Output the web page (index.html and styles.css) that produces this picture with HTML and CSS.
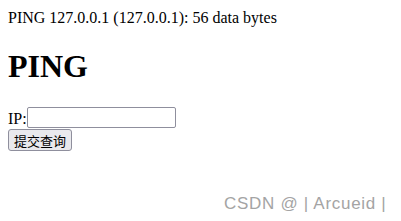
FILE: index.html
```html
<!DOCTYPE html>
<html lang="zh">
<head>
  <meta charset="UTF-8" />
  <title>PING</title>
  <link rel="stylesheet" href="styles.css">
</head>
<body>
  PING 127.0.0.1 (127.0.0.1): 56 data bytes
  <h1>PING</h1>
  <form class="ping-form">
    <div class="ip-row">IP:<input type="text" name="ip" class="ip-input"></div>
    <button type="submit" class="submit-btn">提交查询</button>
  </form>
  <div class="watermark">CSDN @ | Arcueid |</div>
</body>
</html>
```

FILE: styles.css
```css
body {
  margin: 9px 8px 8px;
  font-family: "Liberation Serif", "Noto Sans CJK SC", serif;
  font-size: 16px;
  color: #000;
  background: #fff;
}

h1 {
  font-size: 32px;
  margin: 21px 0 22px;
}

.ip-row {
  display: flex;
  align-items: flex-end;
  height: 21px;
}

.ip-input {
  box-sizing: border-box;
  width: 149px;
  height: 21px;
  padding: 1px 2px;
  border: 1px solid #8f8f9d;
  border-radius: 2px;
  font-size: 13px;
}

.submit-btn {
  box-sizing: border-box;
  font-family: "Noto Sans CJK SC", sans-serif;
  font-size: 13px;
  padding: 0 5px;
  height: 22px;
  border: 1px solid #8f8f9d;
  border-radius: 3px;
  background: #e9e9ed;
  margin-top: 1px;
}

.watermark {
  position: absolute;
  left: 224px;
  top: 194px;
  font-family: "Liberation Sans", Arial, sans-serif;
  font-size: 17px;
  color: #a4a4a4;
  letter-spacing: 0.7px;
}
```
